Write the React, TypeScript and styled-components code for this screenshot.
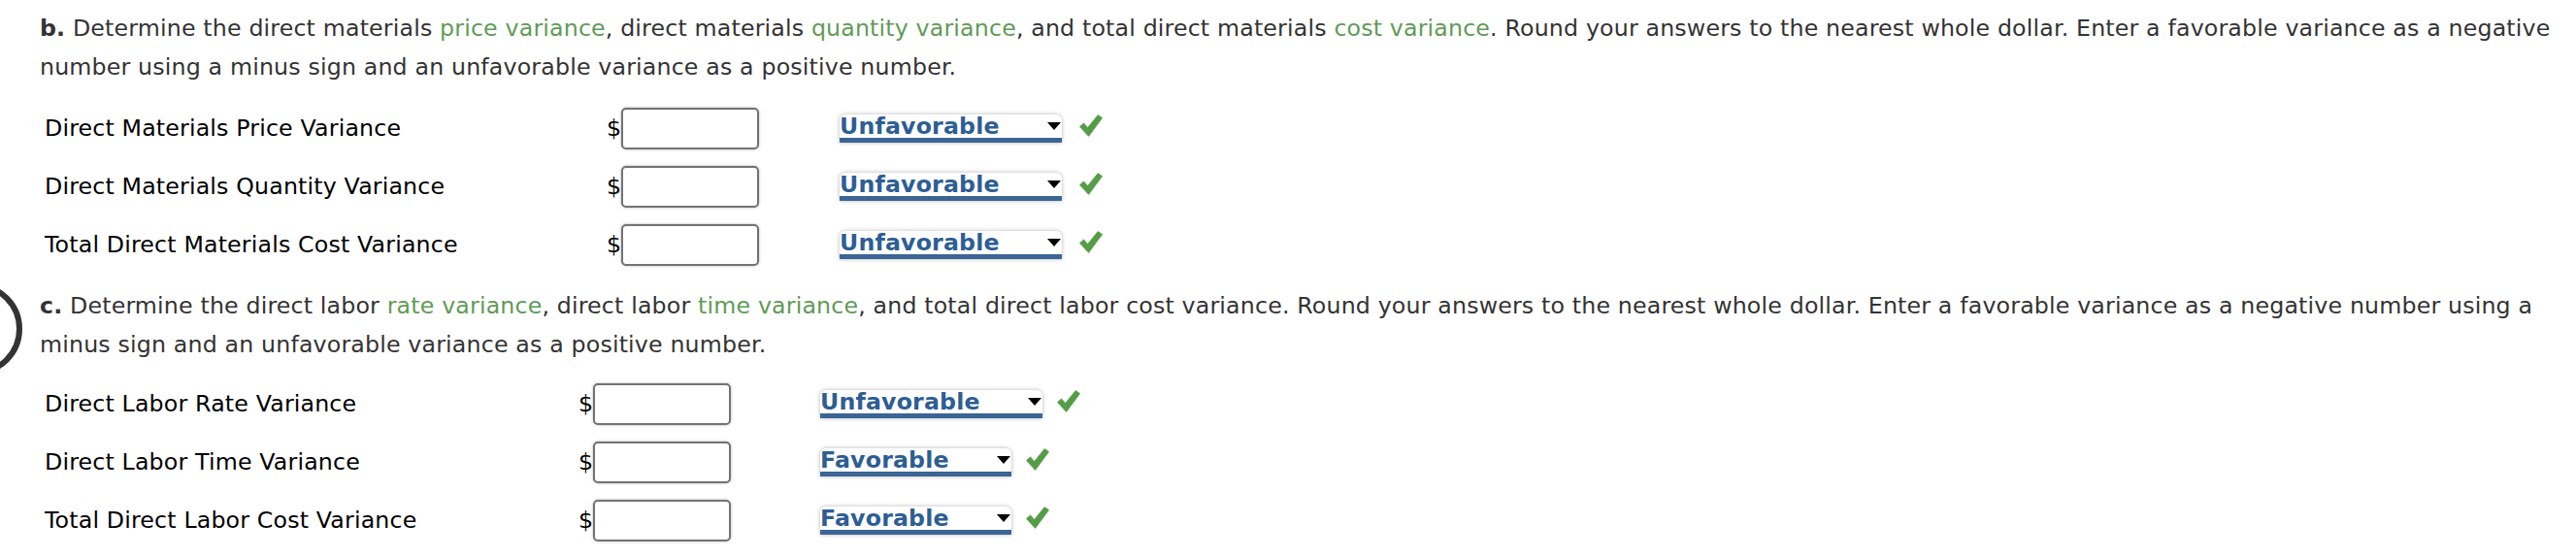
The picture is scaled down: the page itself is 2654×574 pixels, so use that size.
import React from "react";
import styled, { createGlobalStyle } from "styled-components";

const GlobalStyle = createGlobalStyle`
  html, body { margin: 0; padding: 0; background: #ffffff; }
  body { font-family: "DejaVu Sans", Verdana, sans-serif; }
`;

const Page = styled.div`
  position: relative;
  width: 2654px;
  height: 574px;
  box-sizing: border-box;
  padding: 9px 8px 0 41px;
  overflow: hidden;
  font-family: "DejaVu Sans", Verdana, sans-serif;
  font-size: 23.7px;
  letter-spacing: 0.16px;
`;

const NavCircle = styled.div`
  position: absolute;
  left: -73px;
  top: 291px;
  width: 96px;
  height: 96px;
  box-sizing: border-box;
  border: 6px solid #333333;
  border-radius: 50%;
`;

const Prompt = styled.p<{ $top: number }>`
  margin: ${(p) => p.$top}px 0 0 0;
  line-height: 40px;
  color: #333333;
`;

const Part = styled.b`
  color: #333333;
`;

const Term = styled.span`
  color: #5f9b57;
`;

const Table = styled.div<{ $top: number }>`
  margin-top: ${(p) => p.$top}px;
  display: flex;
  flex-direction: column;
  padding-left: 5px;
`;

const Row = styled.div`
  height: 60px;
  display: flex;
  align-items: center;
`;

const Label = styled.div<{ $w: number }>`
  width: ${(p) => p.$w}px;
  flex: none;
  color: #000000;
  white-space: nowrap;
`;

const Money = styled.div`
  display: flex;
  align-items: center;
  flex: none;
`;

const Dollar = styled.span`
  width: 15px;
  color: #000000;
  text-align: left;
  letter-spacing: 0;
`;

const AmountInput = styled.input`
  width: 142px;
  height: 43px;
  box-sizing: border-box;
  border: 2px solid #737373;
  border-radius: 5px;
  box-shadow: 0 0 3px rgba(0, 0, 0, 0.3);
  background: #ffffff;
  margin: 0;
  padding: 0 6px;
  font: inherit;
`;

const SelectWrap = styled.div<{ $gap: number }>`
  position: relative;
  margin-left: ${(p) => p.$gap}px;
  margin-top: 0;
  display: inline-flex;
  flex: none;
`;

const Select = styled.select`
  appearance: none;
  -webkit-appearance: none;
  margin: 0;
  height: 29px;
  box-sizing: border-box;
  padding: 0 64px 0 0;
  border: none;
  border-bottom: 5px solid #3a6595;
  border-radius: 6px 6px 0 0;
  box-shadow: 0 0 4px rgba(0, 0, 0, 0.3);
  background: #ffffff;
  font-family: "DejaVu Sans", Verdana, sans-serif;
  font-size: 23.7px;
  font-weight: bold;
  letter-spacing: 0.16px;
  line-height: 24px;
  color: #2d5e94;
  cursor: pointer;
`;

const Arrow = styled.svg`
  position: absolute;
  right: 1px;
  top: 8px;
  width: 14px;
  height: 8px;
  pointer-events: none;
`;

const Check = styled.svg<{ $gap: number }>`
  margin-left: ${(p) => p.$gap}px;
  margin-top: -5px;
  width: 24px;
  height: 23px;
  flex: none;
`;

type Line = { label: string; choice: string };

const CheckMark = ({ gap }: { gap: number }) => (
  <Check $gap={gap} viewBox="0 0 24 23">
    <path
      d="M0.5 12.6 L4.6 8.9 L8.6 13.6 L19.2 0.6 L23.6 3.6 L9.6 22.4 Z"
      fill="#559c47"
      stroke="#559c47"
      strokeWidth="0.8"
      strokeLinejoin="round"
    />
  </Check>
);

const VarianceRow = ({
  line,
  labelWidth,
  selectGap,
  checkGap,
}: {
  line: Line;
  labelWidth: number;
  selectGap: number;
  checkGap: number;
}) => (
  <Row>
    <Label $w={labelWidth}>{line.label}</Label>
    <Money>
      <Dollar>$</Dollar>
      <AmountInput type="text" aria-label={line.label} />
    </Money>
    <SelectWrap $gap={selectGap}>
      <Select defaultValue={line.choice} aria-label={`${line.label} type`}>
        <option value={line.choice}>{line.choice}</option>
      </Select>
      <Arrow viewBox="0 0 14 8">
        <polygon points="0,0 14,0 7,8" fill="#000000" />
      </Arrow>
    </SelectWrap>
    <CheckMark gap={checkGap} />
  </Row>
);

const materials: Line[] = [
  { label: "Direct Materials Price Variance", choice: "Unfavorable" },
  { label: "Direct Materials Quantity Variance", choice: "Unfavorable" },
  { label: "Total Direct Materials Cost Variance", choice: "Unfavorable" },
];

const labor: Line[] = [
  { label: "Direct Labor Rate Variance", choice: "Unfavorable" },
  { label: "Direct Labor Time Variance", choice: "Favorable" },
  { label: "Total Direct Labor Cost Variance", choice: "Favorable" },
];

export default function App() {
  return (
    <>
      <GlobalStyle />
      <Page>
        <NavCircle />
        <Prompt $top={0}>
          <Part>b.</Part> Determine the direct materials <Term>price variance</Term>, direct
          materials <Term>quantity variance</Term>, and total direct materials{" "}
          <Term>cost variance</Term>. Round your answers to the nearest whole dollar. Enter a
          favorable variance as a negative number using a minus sign and an unfavorable variance
          as a positive number.
        </Prompt>
        <Table $top={13}>
          {materials.map((l) => (
            <VarianceRow key={l.label} line={l} labelWidth={579} selectGap={83} checkGap={18} />
          ))}
        </Table>
        <Prompt $top={13}>
          <Part>c.</Part> Determine the direct labor <Term>rate variance</Term>, direct labor{" "}
          <Term>time variance</Term>, and total direct labor cost variance. Round your answers to
          the nearest whole dollar. Enter a favorable variance as a negative number using a minus
          sign and an unfavorable variance as a positive number.
        </Prompt>
        <Table $top={11}>
          {labor.map((l) => (
            <VarianceRow key={l.label} line={l} labelWidth={550} selectGap={92} checkGap={15} />
          ))}
        </Table>
      </Page>
    </>
  );
}
